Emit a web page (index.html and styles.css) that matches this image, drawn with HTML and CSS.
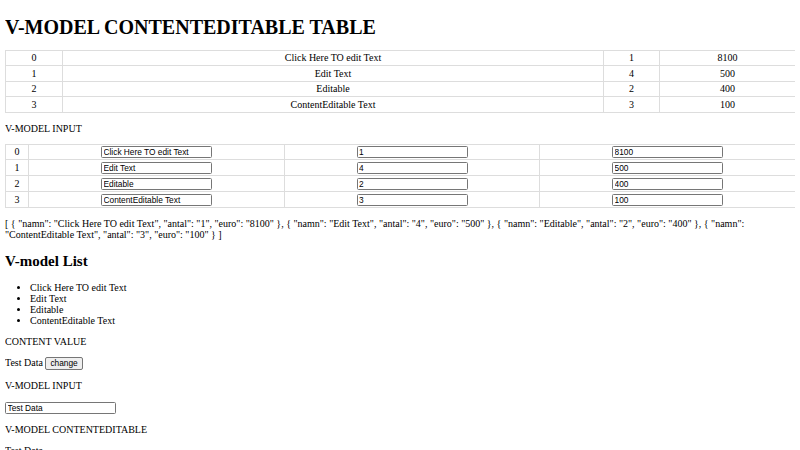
FILE: index.html
```html
<!DOCTYPE html>
<html>
<head>
<meta charset="utf-8">
<link rel="stylesheet" href="styles.css">
</head>
<body>
<div class="app">
  <h1>V-MODEL CONTENTEDITABLE TABLE</h1>
  <table class="tbl tbl-edit">
    <colgroup><col class="c0"><col class="c1"><col class="c2"><col class="c3"></colgroup>
    <tr><td>0</td><td contenteditable="true">Click Here TO edit Text</td><td contenteditable="true">1</td><td contenteditable="true">8100</td></tr>
    <tr><td>1</td><td contenteditable="true">Edit Text</td><td contenteditable="true">4</td><td contenteditable="true">500</td></tr>
    <tr><td>2</td><td contenteditable="true">Editable</td><td contenteditable="true">2</td><td contenteditable="true">400</td></tr>
    <tr><td>3</td><td contenteditable="true">ContentEditable Text</td><td contenteditable="true">3</td><td contenteditable="true">100</td></tr>
  </table>
  <p>V-MODEL INPUT</p>
  <table class="tbl tbl-input">
    <colgroup><col class="d0"><col class="d1"><col class="d2"><col class="d3"></colgroup>
    <tr><td>0</td><td><input class="field" type="text" value="Click Here TO edit Text"></td><td><input class="field" type="text" value="1"></td><td><input class="field" type="text" value="8100"></td></tr>
    <tr><td>1</td><td><input class="field" type="text" value="Edit Text"></td><td><input class="field" type="text" value="4"></td><td><input class="field" type="text" value="500"></td></tr>
    <tr><td>2</td><td><input class="field" type="text" value="Editable"></td><td><input class="field" type="text" value="2"></td><td><input class="field" type="text" value="400"></td></tr>
    <tr><td>3</td><td><input class="field" type="text" value="ContentEditable Text"></td><td><input class="field" type="text" value="3"></td><td><input class="field" type="text" value="100"></td></tr>
  </table>
  <p>[ { "namn": "Click Here TO edit Text", "antal": "1", "euro": "8100" }, { "namn": "Edit Text", "antal": "4", "euro": "500" }, { "namn": "Editable", "antal": "2", "euro": "400" }, { "namn": "ContentEditable Text", "antal": "3", "euro": "100" } ]</p>
  <h2>V-model List</h2>
  <ul class="list">
    <li>Click Here TO edit Text</li>
    <li>Edit Text</li>
    <li>Editable</li>
    <li>ContentEditable Text</li>
  </ul>
  <p>CONTENT VALUE</p>
  <p>Test Data <button class="btn" type="button">change</button></p>
  <p>V-MODEL INPUT</p>
  <input class="field" type="text" value="Test Data">
  <p>V-MODEL CONTENTEDITABLE</p>
  <p contenteditable="true">Test Data</p>
</div>
</body>
</html>
```
FILE: styles.css
```css
body {
  margin: 5px;
  font-family: "Liberation Serif", "Times New Roman", serif;
  font-size: 10px;
  color: #000;
  background: #fff;
}
h1 {
  font-size: 20px;
  margin: 10.5px 0 11px;
}
h2 {
  font-size: 15px;
  margin: 12.45px 0;
}
p {
  margin: 10px 0;
}
.list {
  margin: 10px 0;
  padding-left: 25px;
}
.tbl {
  width: 100%;
  border-collapse: collapse;
  table-layout: fixed;
}
.tbl td {
  border: 1px solid #ddd;
  padding: 1.5px 2px;
  text-align: center;
  vertical-align: middle;
  line-height: 11.5px;
}
.c0 { width: 57px; }
.c1 { width: 541px; }
.c2 { width: 56px; }
.c3 { width: 136px; }
.d0 { width: 23px; }
.d1 { width: 256px; }
.d2 { width: 255px; }
.d3 { width: 256px; }
.tbl-input td {
  padding: 1px 2px;
  height: 12.5px;
}
.field {
  font-family: "Liberation Sans", Arial, sans-serif;
  font-size: 8.33px;
  line-height: 9.5px;
  height: 12.5px;
  padding: 0 1.5px;
  margin: 0;
  border: 1px solid #767676;
  border-radius: 1.5px;
  width: 111px;
  box-sizing: border-box;
  vertical-align: middle;
  background: #fff;
  color: #000;
}
.btn {
  font-family: "Liberation Sans", Arial, sans-serif;
  font-size: 8.33px;
  line-height: 9.5px;
  height: 13px;
  padding: 0 4px;
  margin: 0;
  background: #efefef;
  border: 1px solid #767676;
  border-radius: 2px;
  color: #000;
  vertical-align: baseline;
}
```
